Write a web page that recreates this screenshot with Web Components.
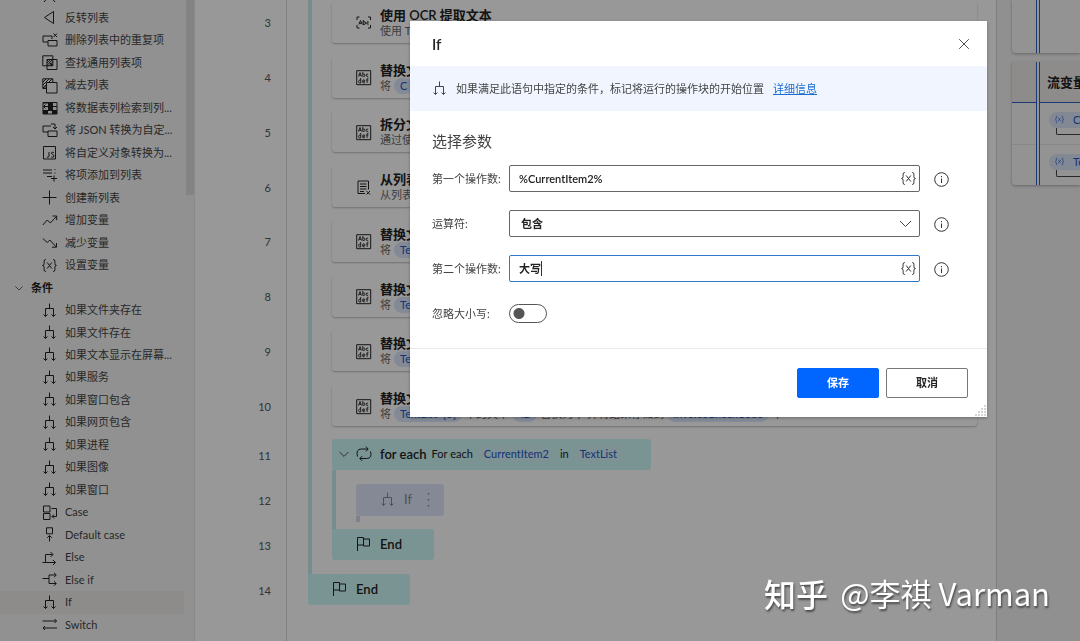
<!DOCTYPE html>
<html lang="zh-CN">
<head>
<meta charset="utf-8">
<title>If</title>
<style>
    html, body {
        height: 100%;
    }
    body {
        margin: 0;
        overflow: hidden;
        background: #fff;
        color: #444;
        font: 11px/16px Lato, "Noto Sans CJK SC", sans-serif;
    }
</style>
</head>
<body>
<flow-designer></flow-designer>

<script>
const icons = {
    sort: '<path d="M2 1l11 13M13 1L2 14"/>',
    reverse: '<path d="M11.500 1.500v12L2.500 7.500z"/>',
    dedupe: '<path d="M6 9H1V3h9v3M6 7.500h9v5.500H6zM11.500 .5l3.500 3.500M15 .5L11.500 4"/>',
    common: '<path d="M.8 .8h10v10h-10zM5 4.500h10v10H5z"/><path d="M5 10.500l5.500-6M5 8l3.500-3.500M7 10.800l3.800-4M9 10.800l1.800-1.800M5 5l5.800 5.800"/>',
    subtract: '<path d="M4.500 10.500H.8V.8h10v3.500M4.500 4.500H15V15H4.500z"/><path d="M1 4l3-3M1 7l6-6M1 10l3.500-3.500M6.500 4.500l3.500-3.500M2 10.500l2.500-2.500"/>',
    datatable: '<path d="M1 2.500h14v11.500H1zM1 10.500h14M5.500 10.500V14M10.500 2.500V14M10.500 6.500H15M6 6.500H1.500M3.500 4.500l-2 2 2 2"/><path fill="currentColor" stroke="none" d="M1 2h5v1.500H1zM6 3h4.500v7.500H6zM1 11h4.500v3H1zM10.500 11H15v3h-4.500z"/>',
    tocustom: '<path d="M6 9H1V3h8M6 8h9v5.500H6zM9 1h4v5M11 4l2 2 2-2"/>',
    js: '<path d="M1.500 1.500h12v12.500h-12z"/><path d="M7 7v4q0 1.500-2 1.200M11.800 7.500q-2.300-1-2.300.7 0 1 1.300 1.300 1.200.4 1.200 1.400 0 2-2.700 1.200"/>',
    additem: '<path d="M1 2h9M1 5h9M12.500 1.500h1M12.500 5h1M5 8.500h5M12 7.500v6M9 10.500h6"/>',
    plus: '<path d="M7.500 .5v14M.5 7.500h14"/>',
    up: '<path d="M.8 12l4.500-5 3 3L14.500 3.500M10.500 3h4.200v4.200"/>',
    down: '<path d="M.8 3.500l4.500 4 2.500-2.500 6.500 7M10 12.200h4.500V8"/>',
    variable: '<path d="M3.800 1.500q-1.700 0-1.700 1.700v2.300Q2.100 7.500.6 7.500q1.500 0 1.500 2v2.300q0 1.700 1.700 1.700M11.200 1.500q1.700 0 1.700 1.700v2.300q0 2 1.500 2-1.500 0-1.500 2v2.300q0 1.700-1.700 1.700M5.200 4.500l4.600 6M9.800 4.500l-4.600 6"/>',
    branch: '<path d="M7.500 .5v5M3.500 13.500v-8h8v8M1.500 11.500l2 2 2-2M9.500 11.500l2 2 2-2"/>',
    case: '<path d="M1.500 1h6.500v6H1.500zM1.500 8.500h6.500v6H1.500zM9.500 3.500h5v8H10M12 9.500l-2 2 2 2"/>',
    defaultcase: '<path d="M4.500 .8h6v6h-6zM7.500 14.500V9M5.200 10.800L7.500 8.500l2.300 2.300"/>',
    else: '<path d="M.5 12.500h13M11 10l2.500 2.500L11 15M3.500 12.500v-8h7M8.500 2l2.500 2.500L8.500 7"/>',
    elseif: '<path d="M.5 6.500h6.500M14 3H7v8.500h7M12 .8L14.300 3 12 5.200M12 9.300l2.300 2.200-2.300 2.300"/>',
    switch: '<path d="M.5 4h14M12.500 2l2 2-2 2M15 11H1M3 9l-2 2 2 2"/>',
    ocr: '<path d="M3.500 2H1v3M12 2h2.500v3M3.500 13H1v-3M12 13h2.500v-3M2.800 9.500l1.700-4 1.700 4M3.300 8.300h2.200M7.200 5v4.500h.8q1.500 0 1.500-1.400T8 6.700h-.7M12.700 7q-2-.8-2 .9t2 1.200"/>',
    text: '<path d="M.7 .7h14v14H.7z"/><path stroke-width=".9" d="M2.500 6.500l1.500-4 1.500 4M3 5.300h2M6.800 2v4.500h.8Q9 6.500 9 5.200T7.600 4h-.8M12.200 4.200q-2-.7-2 1.100t2 1M4.700 8v5h-.9q-1.200 0-1.200-1.600T4.700 10M6.600 11.300h2.300q0-1.500-1.200-1.500t-1.200 1.700 2.300 1.400M12.500 8.200q-1.400-.4-1.400 1V13M10.200 10h2.200"/>',
    listremove: '<path d="M9 13.500H2V1h10.500v8.500M4 4h6.500M4 6.500h6.500M4 9h6.500M4 11.500h4M10.500 11l3.500 3.500M14 11l-3.500 3.500"/>',
    loop: '<path d="M1.500 10.500Q-.5 3 5.500 3H12M9.800 .6L12.200 3 9.800 5.400M14.500 5.500Q16.500 12.500 10.500 12.500H4M6.200 10.100L3.800 12.500l2.400 2.400"/>',
    flag: '<path d="M1.500 15V1.500h6V9h-6M7.500 3h6v7h-6V9"/>',
    chevron: '<path d="M2 5l5.500 5.500L13 5"/>',
    close: '<path d="M1.500 1.500l12 12M13.500 1.500l-12 12"/>',
    info: '<circle cx="7.500" cy="7.500" r="6.800"/><path d="M7.500 6.500V11M7.500 4v1.200"/>',
    more: '<path stroke-width="1.500" d="M7.500 1v1.500M7.500 7v1.500M7.500 13v1.500"/>'
};

class GlyphIcon extends HTMLElement {
    connectedCallback() {
        if (this.shadowRoot) return;
        this.attachShadow({ mode: 'open' });
        this.shadowRoot.innerHTML = `
<style>
    :host { display: inline-block; flex: none; width: 15px; height: 15px; }
    svg { display: block; width: 100%; height: 100%; fill: none; stroke: currentColor; overflow: visible; }
</style>
<svg viewBox="0 0 15 15" aria-hidden="true">${icons[this.getAttribute('name')]}</svg>`;
    }
}
customElements.define('glyph-icon', GlyphIcon);

class ActionItem extends HTMLElement {
    connectedCallback() {
        if (this.shadowRoot) return;
        this.attachShadow({ mode: 'open' });
        this.shadowRoot.innerHTML = `
<style>
    :host {
        display: flex;
        flex: 1;
        align-items: center;
        gap: 8px;
        margin-right: 10px;
        padding-left: 42px;
        white-space: nowrap;
    }
    glyph-icon { color: #222; }
    :host([group]) { padding-left: 14px; gap: 7px; font-weight: 600; color: #222; }
    :host([group]) glyph-icon { width: 10px; height: 10px; }
    :host([selected]) { background: #ebe9e7; }
</style>
<glyph-icon name="${this.getAttribute('icon')}"></glyph-icon>
<span><slot></slot></span>`;
    }
}
customElements.define('action-item', ActionItem);

class ActionsPane extends HTMLElement {
    connectedCallback() {
        if (this.shadowRoot) return;
        this.attachShadow({ mode: 'open' });
        this.shadowRoot.innerHTML = `
<style>
    :host {
        display: flex;
        width: 194px;
        background: #f2f2f2;
        border-right: 1px solid #e4e4e4;
    }
    .list {
        display: flex;
        flex-direction: column;
        flex: 1;
        min-width: 0;
        margin-top: -16px;
        padding-bottom: 5px;
    }
    .thumb { width: 8px; height: 195px; margin-left: -8px; background: #dedcda; }
</style>
<div class="list">
    <action-item icon="sort">随机排列</action-item>
    <action-item icon="reverse">反转列表</action-item>
    <action-item icon="dedupe">删除列表中的重复项</action-item>
    <action-item icon="common">查找通用列表项</action-item>
    <action-item icon="subtract">减去列表</action-item>
    <action-item icon="datatable">将数据表列检索到列...</action-item>
    <action-item icon="tocustom">将 JSON 转换为自定...</action-item>
    <action-item icon="js">将自定义对象转换为...</action-item>
    <action-item icon="additem">将项添加到列表</action-item>
    <action-item icon="plus">创建新列表</action-item>
    <action-item icon="up">增加变量</action-item>
    <action-item icon="down">减少变量</action-item>
    <action-item icon="variable">设置变量</action-item>
    <action-item icon="chevron" group>条件</action-item>
    <action-item icon="branch">如果文件夹存在</action-item>
    <action-item icon="branch">如果文件存在</action-item>
    <action-item icon="branch">如果文本显示在屏幕...</action-item>
    <action-item icon="branch">如果服务</action-item>
    <action-item icon="branch">如果窗口包含</action-item>
    <action-item icon="branch">如果网页包含</action-item>
    <action-item icon="branch">如果进程</action-item>
    <action-item icon="branch">如果图像</action-item>
    <action-item icon="branch">如果窗口</action-item>
    <action-item icon="case">Case</action-item>
    <action-item icon="defaultcase">Default case</action-item>
    <action-item icon="else">Else</action-item>
    <action-item icon="elseif">Else if</action-item>
    <action-item icon="branch" selected>If</action-item>
    <action-item icon="switch">Switch</action-item>
</div>
<div class="thumb"></div>`;
    }
}
customElements.define('actions-pane', ActionsPane);

class VarChip extends HTMLElement {
    connectedCallback() {
        if (this.shadowRoot) return;
        this.attachShadow({ mode: 'open' });
        this.shadowRoot.innerHTML = `
<style>
    :host {
        display: inline-block;
        padding: 0 6px;
        border-radius: 8px;
        background: var(--chip, #dbe6fa);
        color: #2456c8;
        white-space: nowrap;
    }
</style>
<slot></slot>`;
    }
}
customElements.define('var-chip', VarChip);

// One line of the flow: its number in the gutter, the loop rail, and the block
class FlowLine extends HTMLElement {
    connectedCallback() {
        if (this.shadowRoot) return;
        this.attachShadow({ mode: 'open' });
        this.shadowRoot.innerHTML = `
<style>
    :host { display: flex; height: 45px; }
    :host([card]) { flex: 1; height: auto; }
    .number {
        display: flex;
        align-items: center;
        justify-content: flex-end;
        width: 76px;
        padding-right: 15px;
        border-right: 1px solid #d8d8d8;
        color: #555;
    }
    :host([card]) .number { padding-top: 2px; }
    .body { display: flex; flex: 1; min-width: 0; padding-left: 21px; }
    .rail { width: 4px; margin-right: 20px; background: #c3ebe9; }
    :host([last]) .rail { display: none; }
    .content { display: flex; flex: 1; min-width: 0; }
</style>
<div class="number">${this.getAttribute('number')}</div>
<div class="body"><div class="rail"></div><div class="content"><slot></slot></div></div>`;
    }
}
customElements.define('flow-line', FlowLine);

class FlowCard extends HTMLElement {
    connectedCallback() {
        if (this.shadowRoot) return;
        this.attachShadow({ mode: 'open' });
        this.shadowRoot.innerHTML = `
<style>
    :host {
        display: flex;
        flex: 1;
        align-items: center;
        gap: 9px;
        min-width: 0;
        margin: 6px 19px 7px 0;
        padding: 2px 0 0 24px;
        border-radius: 3px;
        box-shadow: 0 1px 2px #bbb;
        white-space: nowrap;
    }
    glyph-icon { color: #222; }
    .title { font-size: 13px; font-weight: 600; color: #222; }
    .detail { display: flex; gap: 3px; color: #666; }
</style>
<glyph-icon name="${this.getAttribute('icon')}"></glyph-icon>
<div>
    <div class="title">${this.getAttribute('heading')}</div>
    <div class="detail"><slot></slot></div>
</div>`;
    }
}
customElements.define('flow-card', FlowCard);

class FlowBlock extends HTMLElement {
    connectedCallback() {
        if (this.shadowRoot) return;
        this.attachShadow({ mode: 'open' });
        this.shadowRoot.innerHTML = `
<style>
    :host { display: flex; --tone: #cbf5f5; --chip: #d3f2f6; }
    .inner { width: 4px; margin-right: 20px; background: #c3ebe9; }
    .stack { display: flex; flex-direction: column; }
    .block {
        box-sizing: border-box;
        display: flex;
        align-items: center;
        gap: 9px;
        height: 31px;
        padding: 0 28px 2px 24px;
        border-radius: 3px;
        background: var(--tone);
        color: #222;
        white-space: nowrap;
    }
    b { font-size: 13px; font-weight: 600; }
    .words { display: flex; align-items: center; gap: 5px; }
    .lead { width: 4px; height: 6px; }
    .tail { flex: 1; width: 4px; background: #c3ebe9; }
    .chevron { width: 12px; height: 12px; }
    .loop { margin-right: 3px; }
    :host([kind=each]) .block { gap: 6px; padding-left: 6px; }
    :host([kind=end]) .block { width: 102px; border-radius: 0 3px 3px 3px; }
    :host([kind=end]) .lead { background: #c3ebe9; }
    :host([kind=if]) .block { height: 32px; padding-right: 8px; background: #dde5f9; color: #888; }
    :host([kind=if]) .tail { flex: none; height: 6px; background: #d0d8ec; }
    .fade { font-size: 13px; }
</style>
${this.render(this.getAttribute('kind'))}`;
    }

    render(kind) {
        if (kind == 'each') return `
<div class="stack">
    <div class="lead"></div>
    <div class="block">
        <glyph-icon name="chevron" class="chevron"></glyph-icon>
        <glyph-icon name="loop" class="loop"></glyph-icon>
        <div class="words"><b>for each</b><span>For each</span><var-chip>CurrentItem2</var-chip><span>in</span><var-chip>TextList</var-chip></div>
    </div>
    <div class="tail"></div>
</div>`;
        if (kind == 'if') return `
<div class="inner"></div>
<div class="stack">
    <div class="lead"></div>
    <div class="block"><glyph-icon name="branch"></glyph-icon><span class="fade">If</span><glyph-icon name="more"></glyph-icon></div>
    <div class="tail"></div>
</div>`;
        return `
<div class="stack">
    <div class="lead"></div>
    <div class="block"><glyph-icon name="flag"></glyph-icon><b>End</b></div>
</div>`;
    }
}
customElements.define('flow-block', FlowBlock);

class FlowEditor extends HTMLElement {
    connectedCallback() {
        if (this.shadowRoot) return;
        this.attachShadow({ mode: 'open' });
        this.shadowRoot.innerHTML = `
<style>
    :host { display: flex; flex-direction: column; flex: 1; min-width: 0; background: #fefefe; }
    .lines { display: flex; flex: 1; flex-direction: column; margin-top: -5px; }
    .rest { flex: none; width: 91px; height: 28px; border-right: 1px solid #d8d8d8; }
</style>
<div class="lines">
    <flow-line card number="3"><flow-card icon="ocr" heading="使用 OCR 提取文本">使用 T</flow-card></flow-line>
    <flow-line card number="4"><flow-card icon="text" heading="替换文本">将 <var-chip>C</var-chip></flow-card></flow-line>
    <flow-line card number="5"><flow-card icon="text" heading="拆分文本">通过使</flow-card></flow-line>
    <flow-line card number="6"><flow-card icon="listremove" heading="从列表">从列表</flow-card></flow-line>
    <flow-line card number="7"><flow-card icon="text" heading="替换文本">将 <var-chip>Te</var-chip></flow-card></flow-line>
    <flow-line card number="8"><flow-card icon="text" heading="替换文本">将 <var-chip>Te</var-chip></flow-card></flow-line>
    <flow-line card number="9"><flow-card icon="text" heading="替换文本">将 <var-chip>Te</var-chip></flow-card></flow-line>
    <flow-line card number="10"><flow-card icon="text" heading="替换文本">将 <var-chip>TextList &nbsp;[3]</var-chip> 中的文本 <var-chip>\\D</var-chip> 替换为 ，并将结果存储到 <var-chip>InvoiceCheckCode</var-chip> 中</flow-card></flow-line>
    <flow-line number="11"><flow-block kind="each"></flow-block></flow-line>
    <flow-line number="12"><flow-block kind="if"></flow-block></flow-line>
    <flow-line number="13"><flow-block kind="end"></flow-block></flow-line>
    <flow-line number="14" last><flow-block kind="end"></flow-block></flow-line>
    <div class="rest"></div>
</div>`;
    }
}
customElements.define('flow-editor', FlowEditor);

class VariablesPane extends HTMLElement {
    connectedCallback() {
        if (this.shadowRoot) return;
        this.attachShadow({ mode: 'open' });
        this.shadowRoot.innerHTML = `
<style>
    :host {
        box-sizing: border-box;
        display: flex;
        flex-direction: column;
        gap: 9px;
        width: 84px;
        padding-left: 15px;
        overflow: hidden;
        background: #f0f0f0;
        border-left: 1px solid #d2d2d2;
    }
    .card {
        display: grid;
        grid-template-columns: 24px 4px 1fr;
        border-radius: 0 0 0 4px;
        background: #f6f6f6;
        box-shadow: 0 1px 3px #aaa;
        white-space: nowrap;
    }
    .blank { height: 53px; }
    .bars { border: solid #2a5fc4; border-width: 0 1px; }
    .head { height: 40px; background: #ece9e7; border-bottom: 1px solid #2a5fc4; }
    .head.name { padding-left: 7px; font-size: 13px; font-weight: 600; line-height: 40px; color: #222; }
    .cell { height: 41px; box-sizing: border-box; }
    .cell + .bars + .cell { padding: 9px 0 0 9px; }
    .line { border-top: 1px solid #e2e2e2; }
    .pill { --chip: #d9e4f7; display: block; }
    .pill glyph-icon { width: 9px; height: 9px; margin-right: 9px; }
    .edge { height: 6px; margin-left: 7px; border: solid #444; border-width: 0 0 1px 1px; border-radius: 0 0 0 2px; }
</style>
<div class="card"><div class="blank"></div><div class="bars"></div><div></div></div>
<div class="card">
    <div class="head"></div><div class="bars"></div><div class="head name">流变量</div>
    <div class="cell"></div><div class="bars"></div>
    <div class="cell"><var-chip class="pill"><glyph-icon name="variable"></glyph-icon>CurrentItem2</var-chip><div class="edge"></div></div>
    <div class="cell line"></div><div class="bars"></div>
    <div class="cell line"><var-chip class="pill"><glyph-icon name="variable"></glyph-icon>TextList</var-chip><div class="edge"></div></div>
</div>`;
    }
}
customElements.define('variables-pane', VariablesPane);

class FormField extends HTMLElement {
    connectedCallback() {
        if (this.shadowRoot) return;
        this.attachShadow({ mode: 'open' });
        const type = this.getAttribute('type');
        this.shadowRoot.innerHTML = `
<style>
    :host { display: flex; align-items: center; height: 27px; }
    label { width: 77px; white-space: nowrap; }
    .box {
        box-sizing: border-box;
        display: flex;
        align-items: center;
        flex: 1;
        height: 27px;
        padding: 0 3px 0 9px;
        border: 1px solid #666;
        border-radius: 2px;
        background: #fff;
    }
    :host([focused]) .box { border-color: #2f78c8; }
    :host([focused]) input { background: linear-gradient(#333, #333) no-repeat 22px center / 1px 15px; }
    :host([type=select]) .box { padding: 0 6px 0 11px; }
    input[type=text], select {
        flex: 1;
        min-width: 0;
        margin: 0;
        padding: 0;
        border: 0;
        outline: 0;
        background: none;
        appearance: none;
        color: #222;
        font: inherit;
        font-weight: 600;
    }
    button { display: flex; margin: 0; padding: 0; border: 0; background: none; color: #333; }
    .info { margin: 2px 0 0 14px; }
    input[type=checkbox] {
        box-sizing: border-box;
        width: 38px;
        height: 19px;
        margin: 0;
        appearance: none;
        border: 1px solid #555;
        border-radius: 10px;
        background: radial-gradient(circle at 9px 50%, #555 5px, transparent 6px);
    }
</style>
<label for="control">${this.getAttribute('label')}</label>
${this.control(type)}
${type == 'switch' ? '' : '<button type="button" class="info" aria-label="信息"><glyph-icon name="info"></glyph-icon></button>'}`;
    }

    control(type) {
        const value = this.getAttribute('value');
        if (type == 'switch') return '<input id="control" type="checkbox" role="switch">';
        if (type == 'select') return `<div class="box"><select id="control"><option>${value}</option></select><glyph-icon name="chevron"></glyph-icon></div>`;
        return `<div class="box"><input id="control" type="text" value="${value}"><button type="button" aria-label="选择变量"><glyph-icon name="variable"></glyph-icon></button></div>`;
    }
}
customElements.define('form-field', FormField);

class ActionDialog extends HTMLElement {
    connectedCallback() {
        if (this.shadowRoot) return;
        this.attachShadow({ mode: 'open' });
        this.shadowRoot.innerHTML = `
<style>
    :host {
        position: fixed;
        inset: 0;
        display: flex;
        align-items: flex-start;
        padding: 21px 93px 0 410px;
        background: rgba(0, 0, 0, .4);
    }
    section { position: relative; flex: 1; min-width: 0; background: #fff; box-shadow: 0 1px 3px rgba(0, 0, 0, .3); }
    header, .banner { display: flex; align-items: center; height: 45px; padding: 0 15px 0 22px; }
    h1 { flex: 1; margin: 0; font-size: 15px; font-weight: 600; line-height: 20px; color: #222; }
    button { font: inherit; font-weight: 600; }
    .close { display: flex; padding: 2px; border: 0; background: none; color: #222; }
    .close glyph-icon { width: 12px; height: 12px; }
    .banner { gap: 9px; background: #f0f5ff; white-space: nowrap; }
    a { margin-left: 9px; color: #1a6ed0; text-decoration: underline; }
    form { display: flex; flex-direction: column; gap: 18px; padding: 20px 38px 21px 22px; border-bottom: 1px solid #eaeaea; }
    h2 { margin: 0 0 -4px; font-size: 15px; font-weight: 400; line-height: 20px; }
    footer { display: flex; justify-content: flex-end; gap: 7px; padding: 19px; }
    footer button { box-sizing: border-box; width: 82px; height: 30px; padding: 0; border: 1px solid #777; border-radius: 2px; background: #fff; color: #222; }
    footer .save { border-color: #0066ff; background: #0066ff; color: #fff; }
    .grip { position: absolute; right: 1px; bottom: 1px; width: 11px; height: 11px; color: #aaa; }
</style>
<section role="dialog" aria-label="If">
    <header><h1>If</h1><button class="close" aria-label="关闭"><glyph-icon name="close"></glyph-icon></button></header>
    <div class="banner">
        <glyph-icon name="branch"></glyph-icon>
        <span>如果满足此语句中指定的条件，标记将运行的操作块的开始位置<a href="#">详细信息</a></span>
    </div>
    <form>
        <h2>选择参数</h2>
        <form-field type="text" label="第一个操作数:" value="%CurrentItem2%"></form-field>
        <form-field type="select" label="运算符:" value="包含"></form-field>
        <form-field type="text" label="第二个操作数:" value="大写" focused></form-field>
        <form-field type="switch" label="忽略大小写:"></form-field>
    </form>
    <footer><button class="save">保存</button><button>取消</button></footer>
    <svg class="grip" viewBox="0 0 11 11" fill="none" stroke="currentColor" stroke-dasharray="2 1"><path d="M0 10h11M3 7h8M6 4h5M9 1h2"/></svg>
</section>`;
    }
}
customElements.define('action-dialog', ActionDialog);

class WaterMark extends HTMLElement {
    connectedCallback() {
        if (this.shadowRoot) return;
        this.attachShadow({ mode: 'open' });
        this.shadowRoot.innerHTML = `
<style>
    :host {
        position: fixed;
        right: 30px;
        bottom: 28px;
        display: flex;
        gap: 12px;
        color: #fff;
        font: 31px/40px "Noto Sans CJK SC", sans-serif;
        text-shadow: 1px 2px 2px rgba(0, 0, 0, .5);
        white-space: nowrap;
    }
    b { font-size: 32px; font-weight: 500; }
</style>
<b>知乎</b><span><slot></slot></span>`;
    }
}
customElements.define('water-mark', WaterMark);

class FlowDesigner extends HTMLElement {
    connectedCallback() {
        if (this.shadowRoot) return;
        this.attachShadow({ mode: 'open' });
        this.shadowRoot.innerHTML = `
<style>
    :host { display: flex; height: 100%; }
</style>
<actions-pane></actions-pane>
<flow-editor></flow-editor>
<variables-pane></variables-pane>
<action-dialog></action-dialog>
<water-mark>@李祺 Varman</water-mark>`;
    }
}
customElements.define('flow-designer', FlowDesigner);
</script>
</body>
</html>
